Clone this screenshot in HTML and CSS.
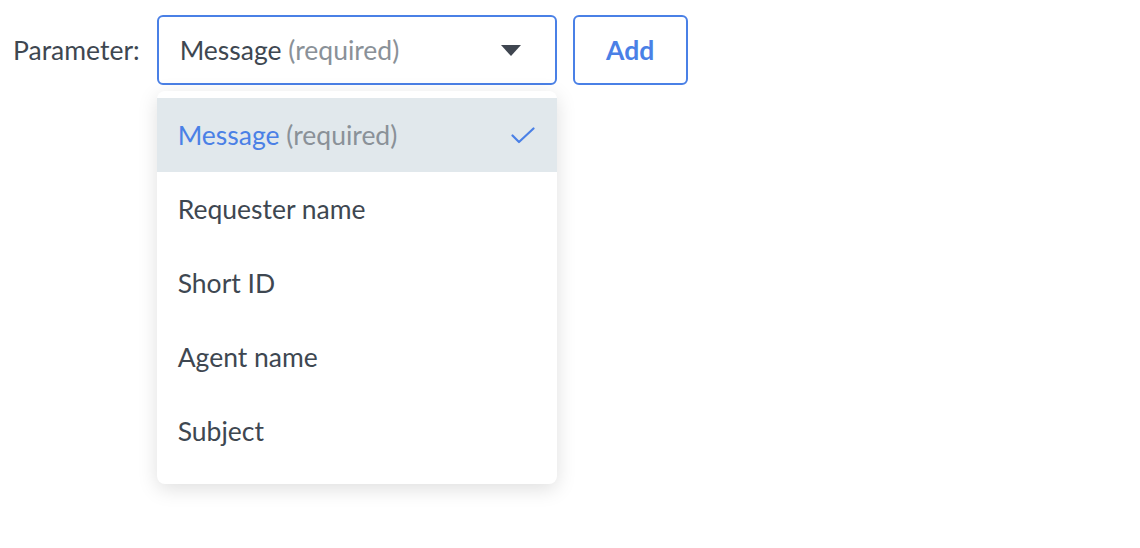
FILE: index.html
```html
<!DOCTYPE html>
<html>
<head>
<meta charset="utf-8">
<link rel="stylesheet" href="styles.css">
</head>
<body>
<div class="row">
  <div class="label">Parameter:</div>
  <div class="select-wrap">
    <div class="select">
      <span class="value">Message <span class="muted">(required)</span></span>
      <svg class="caret" width="20" height="11" viewBox="0 0 20 11"><path d="M0 0 H20 L10 11 Z" fill="#3f4650"/></svg>
    </div>
    <div class="menu">
      <div class="item selected"><span><span class="blue">Message</span> <span class="muted">(required)</span></span>
        <svg class="check" width="24" height="17" viewBox="0 0 24 17"><path d="M1.5 8.5 L8 15 L22.5 1.5" fill="none" stroke="#4a80e6" stroke-width="2.2" stroke-linecap="round" stroke-linejoin="round"/></svg>
      </div>
      <div class="item">Requester name</div>
      <div class="item">Short ID</div>
      <div class="item">Agent name</div>
      <div class="item">Subject</div>
    </div>
  </div>
  <div class="btn">Add</div>
</div>
</body>
</html>
```
FILE: styles.css
```css
html, body {
  margin: 0;
  padding: 0;
  background: #ffffff;
}
html {
  height: 100%;
}
body {
  min-height: 548px;
  font-family: "Lato", "Open Sans", sans-serif;
  color: #3e4751;
  font-size: 26.5px;
}
.row {
  display: flex;
  align-items: flex-start;
  padding: 15px 0 0 13px;
}
.label {
  height: 70px;
  display: flex;
  align-items: center;
  margin-right: 17px;
}
.select-wrap {
  display: flex;
  flex-direction: column;
  width: 400px;
}
.select {
  box-sizing: border-box;
  height: 70px;
  border: 2px solid #4a80e6;
  border-radius: 6px;
  display: flex;
  align-items: center;
  justify-content: space-between;
  padding: 0 34px 0 21px;
}
.muted {
  color: #8a9198;
}
.blue {
  color: #4a80e6;
}
.menu {
  margin-top: 6px;
  width: 400px;
  box-sizing: border-box;
  padding: 7px 0 16px;
  background: #ffffff;
  border-radius: 8px;
  box-shadow: 0 5px 20px rgba(0, 0, 0, 0.13);
}
.item {
  height: 74px;
  display: flex;
  align-items: center;
  justify-content: space-between;
  padding: 0 22px 0 21px;
}
.item.selected {
  background: #e1e8ec;
}
.btn {
  box-sizing: border-box;
  margin-left: 16px;
  width: 115px;
  height: 70px;
  border: 2px solid #4a80e6;
  border-radius: 6px;
  background: #ffffff;
  color: #4a80e6;
  font-weight: 700;
  display: flex;
  align-items: center;
  justify-content: center;
}
```
